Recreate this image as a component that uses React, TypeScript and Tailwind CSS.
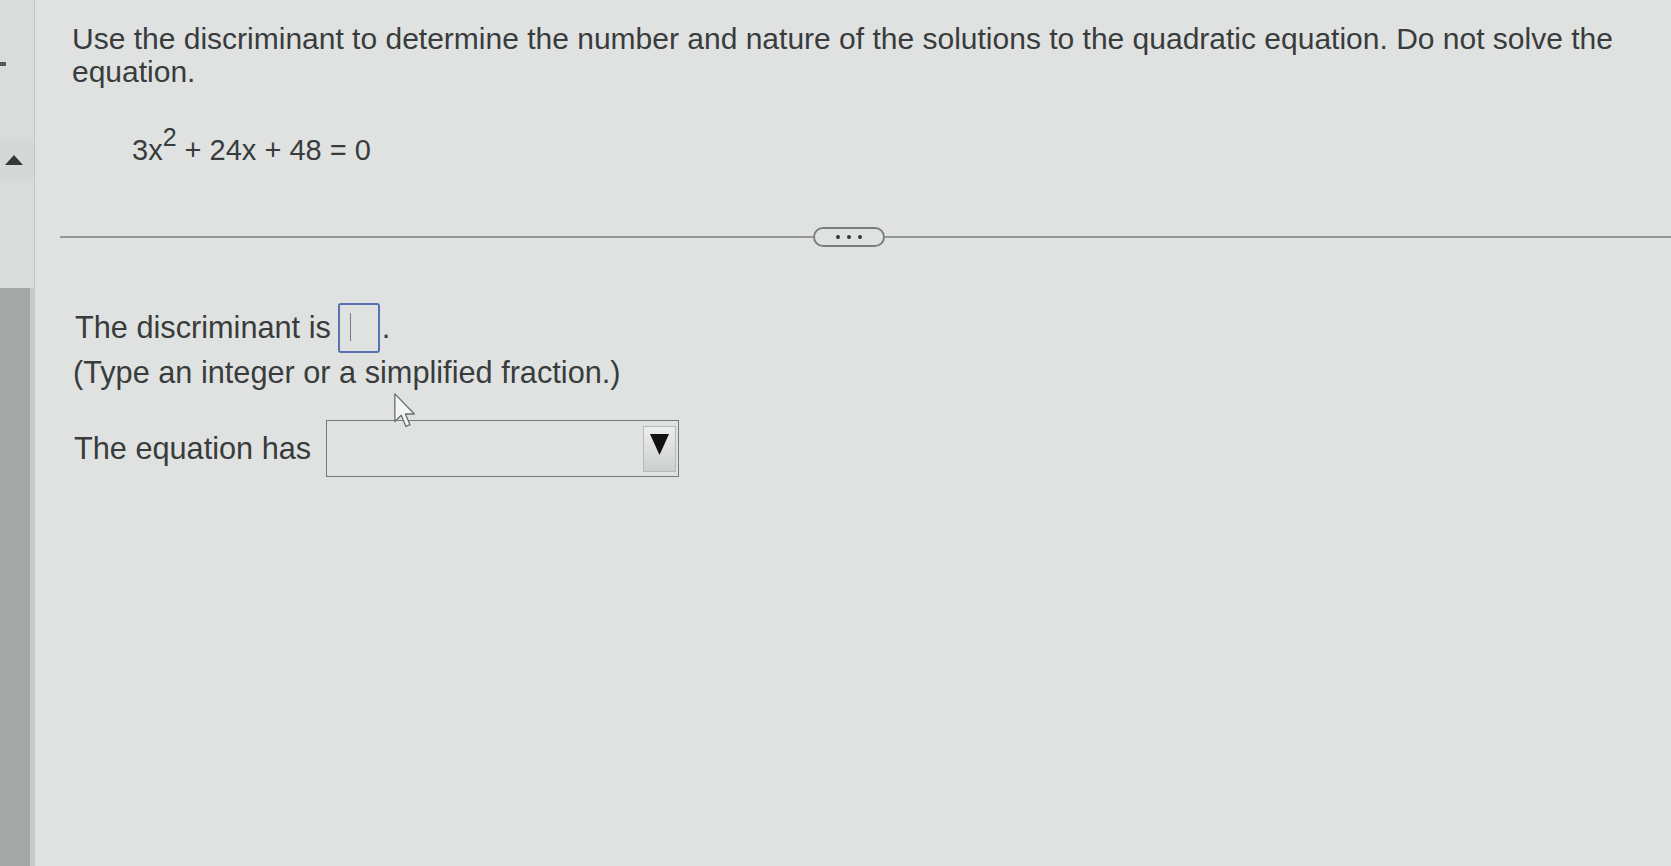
import React from "react";

export default function App() {
  return (
    <div className="relative flex h-[866px] w-full overflow-hidden bg-[#e0e2e1] font-['Liberation_Sans',Arial,sans-serif] text-[#393c3c]">
      <aside className="flex w-[35px] shrink-0 flex-col">
        <div className="flex h-[288px] flex-col border-r border-[#c3c5c4] bg-[#dadcdb]">
          <div className="mt-[62px] h-[4px] w-[6px] bg-[#545756]" />
          <div className="mt-[74px] flex h-[40px] items-center bg-[#d6d8d7] pl-[5px]">
            <svg width="18" height="10" viewBox="0 0 18 10">
              <polygon points="9,0 18,10 0,10" fill="#363838" />
            </svg>
          </div>
        </div>
        <div className="flex flex-1">
          <div className="w-[30px] bg-[#a5a8a7]" />
          <div className="flex-1 bg-[#c8cac9]" />
        </div>
      </aside>

      <main className="flex flex-1 flex-col pl-[37px] pt-[22px]">
        <p className="pr-[20px] text-[30px] leading-[33px]">
          Use the discriminant to determine the number and nature of the solutions to the quadratic equation. Do not solve the equation.
        </p>

        <div className="mt-[44px] pl-[60px] text-[29px] leading-[36px]">
          3x<sup className="-top-[14px] text-[25px]">2</sup> + 24x + 48 = 0
        </div>

        <div className="-ml-[12px] mt-[59px] flex h-[20px] items-center">
          <div className="h-[2px] w-[753px] bg-[#949796]" />
          <div className="flex h-[20px] w-[72px] items-center justify-center gap-[7px] rounded-full border-2 border-[#7b7e7d]">
            <span className="h-[4px] w-[4px] rounded-full bg-[#333535]" />
            <span className="h-[4px] w-[4px] rounded-full bg-[#333535]" />
            <span className="h-[4px] w-[4px] rounded-full bg-[#333535]" />
          </div>
          <div className="h-[2px] flex-1 bg-[#949796]" />
        </div>

        <div className="mt-[56px] flex h-[50px] items-center pl-[3px] text-[30.7px] leading-[36px]">
          <span>The discriminant is</span>
          <div className="ml-[7px] flex h-[50px] w-[42px] items-start rounded-[3px] border-2 border-[#5670b0] pl-[10px] pt-[8px]">
            <div className="h-[28px] w-px bg-[#7a7c7c]" />
          </div>
          <span className="ml-[2px]">.</span>
        </div>

        <p className="mt-[2px] pl-[1px] text-[30.7px] leading-[36px]">(Type an integer or a simplified fraction.)</p>

        <div className="mt-[29px] flex h-[57px] items-center pl-[2px] text-[30.7px] leading-[36px]">
          <span>The equation has</span>
          <div className="ml-[15px] flex h-[57px] w-[353px] items-center justify-end border-[1.5px] border-[#767978] pr-[2px]">
            <div className="flex h-[46px] w-[33px] justify-center border border-[#b9bbba] bg-linear-to-b from-[#eceeed] to-[#cdcfce] pt-[7px]">
              <svg width="19" height="21" viewBox="0 0 19 21">
                <polygon points="0,0 19,0 9.5,21" fill="#111" />
              </svg>
            </div>
          </div>
        </div>
      </main>

      <svg
        className="absolute left-[393px] top-[392px]"
        width="24"
        height="37"
        viewBox="0 0 13 20"
      >
        <path
          d="M1 1 L1 16 L4.5 12.6 L7 18.6 L9.2 17.7 L6.7 11.9 L11.6 11.9 Z"
          fill="#f3f4f4"
          stroke="#6a6d6c"
          strokeWidth="0.7"
          strokeLinejoin="round"
        />
      </svg>
    </div>
  );
}
